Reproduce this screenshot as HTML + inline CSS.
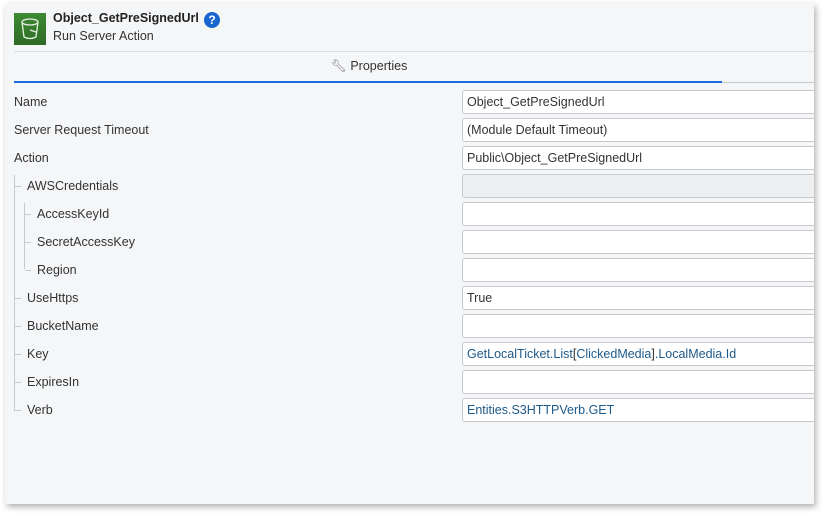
<!DOCTYPE html>
<html><head><meta charset="utf-8"><style>
body{margin:0;width:829px;height:519px;background:#fff;font-family:"Liberation Sans",sans-serif;font-size:12.5px;color:#333;position:relative;overflow:hidden}
.panel{position:absolute;left:5px;top:3px;width:809px;height:501px;background:#f5f6f8;box-shadow:2px 3px 6px rgba(0,0,0,.3);overflow:hidden}
.in{position:absolute;left:0;top:1px;width:809px;height:500px}
.abs{position:absolute}
.lbl{position:absolute;line-height:24px;white-space:nowrap}
.inp{position:absolute;left:457px;width:360px;height:22px;border:1px solid #c8c9cc;border-radius:3px;background:#fff;line-height:22px;padding-left:4px;box-sizing:content-box;white-space:nowrap}
.vl{position:absolute;width:1px;background:#c8c9cc}
.hl{position:absolute;height:1px;background:#c8c9cc}
.b{color:#1e5a8a}
</style></head><body>
<div class="panel"><div class="in">
 <div class="abs" style="left:9px;top:9px;width:32px;height:32px;background:linear-gradient(#3f8a34,#2e6b26)">
  <svg width="32" height="32" viewBox="0 0 32 32"><g fill="none" stroke="#e6f0e2" stroke-width="1.3"><ellipse cx="16" cy="9" rx="8" ry="3"/><path d="M8 9 L10 24 Q16 27 22 24 L24 9"/><path d="M16 17 L22 19"/></g></svg>
 </div>
 <div class="abs" style="left:48px;top:7px;font-weight:bold;font-size:12.5px;color:#222">Object_GetPreSignedUrl</div>
 <div class="abs" style="left:199px;top:8px;width:16px;height:16px;border-radius:50%;background:#1a66d1;color:#fff;font-weight:bold;font-size:12px;text-align:center;line-height:16px">?</div>
 <div class="abs" style="left:48px;top:25px;font-size:12.5px;color:#333">Run Server Action</div>
 <div class="hl" style="left:9px;top:47px;width:800px;background:#dcdde0"></div>
 <div class="abs" style="left:326px;top:55px;color:#333"><span style="color:#777">&#128295;&#xFE0E;</span> Properties</div>
 <div class="hl" style="left:9px;top:78px;width:800px;background:#c8c9cc"></div>
 <div class="abs" style="left:9px;top:77px;width:708px;height:2px;background:#1a6ae0"></div>

 <div class="lbl" style="left:9px;top:86px">Name</div>
 <div class="inp" style="top:86px">Object_GetPreSignedUrl</div>
 <div class="lbl" style="left:9px;top:114px">Server Request Timeout</div>
 <div class="inp" style="top:114px">(Module Default Timeout)</div>
 <div class="lbl" style="left:9px;top:142px">Action</div>
 <div class="inp" style="top:142px">Public\Object_GetPreSignedUrl</div>

 <div class="vl" style="left:9px;top:171px;height:236px"></div>
 <div class="vl" style="left:19px;top:199px;height:66px"></div>

 <div class="hl" style="left:10px;top:182px;width:6px"></div><div class="lbl" style="left:22px;top:170px">AWSCredentials</div>
 <div class="inp" style="top:170px;background:#eeeff1"></div>
 <div class="hl" style="left:20px;top:210px;width:6px"></div><div class="lbl" style="left:32px;top:198px">AccessKeyId</div>
 <div class="inp" style="top:198px"></div>
 <div class="hl" style="left:20px;top:238px;width:6px"></div><div class="lbl" style="left:32px;top:226px">SecretAccessKey</div>
 <div class="inp" style="top:226px"></div>
 <div class="hl" style="left:20px;top:266px;width:6px"></div><div class="lbl" style="left:32px;top:254px">Region</div>
 <div class="inp" style="top:254px"></div>
 <div class="hl" style="left:10px;top:294px;width:6px"></div><div class="lbl" style="left:22px;top:282px">UseHttps</div>
 <div class="inp" style="top:282px">True</div>
 <div class="hl" style="left:10px;top:322px;width:6px"></div><div class="lbl" style="left:22px;top:310px">BucketName</div>
 <div class="inp" style="top:310px"></div>
 <div class="hl" style="left:10px;top:350px;width:6px"></div><div class="lbl" style="left:22px;top:338px">Key</div>
 <div class="inp" style="top:338px"><span class="b">GetLocalTicket.List</span>[<span class="b">ClickedMedia</span>]<span class="b">.LocalMedia.Id</span></div>
 <div class="hl" style="left:10px;top:378px;width:6px"></div><div class="lbl" style="left:22px;top:366px">ExpiresIn</div>
 <div class="inp" style="top:366px"></div>
 <div class="hl" style="left:10px;top:406px;width:6px"></div><div class="lbl" style="left:22px;top:394px">Verb</div>
 <div class="inp" style="top:394px"><span class="b">Entities.S3HTTPVerb.GET</span></div>
</div></div>
</body></html>
